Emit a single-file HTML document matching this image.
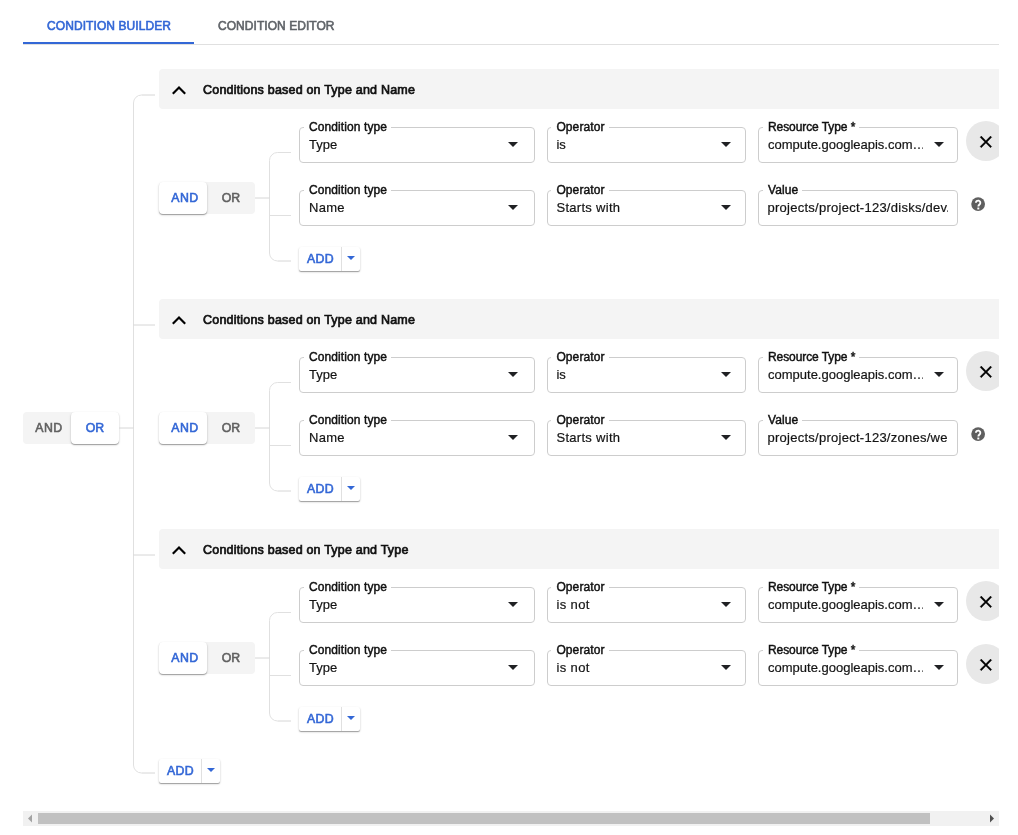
<!DOCTYPE html><html><head><meta charset="utf-8"><style>
*{margin:0;padding:0;box-sizing:border-box}
html,body{width:1018px;height:835px;overflow:hidden;background:#fff;position:relative;font-family:"Liberation Sans",sans-serif;color:#202124}
.a{position:absolute}
.t{position:absolute;white-space:nowrap;line-height:1}
.tab{font-size:12px;font-weight:normal;-webkit-text-stroke:0.6px currentColor;letter-spacing:0.15px}
.hb{position:absolute;left:159px;width:840px;height:40px;background:#f4f4f4;border-radius:4px 0 0 4px}
.ht{font-size:12.5px;font-weight:normal;-webkit-text-stroke:0.7px #111;letter-spacing:0.2px;color:#111}
.fld{position:absolute;height:36px;border:1px solid #cdcdcd;border-radius:4px;background:transparent}
.lbl{position:absolute;top:-8px;left:4px;padding:0 4px 0 5px;background:rgba(255,255,255,0.996);font-size:12px;font-weight:normal;-webkit-text-stroke:0.45px #111;letter-spacing:0.1px;line-height:14px;color:#111;white-space:nowrap}
.val{position:absolute;top:9px;left:9px;font-size:13px;line-height:15px;color:#141414;-webkit-text-stroke:0.2px #141414;white-space:nowrap;overflow:hidden}
.arr{position:absolute;top:14px;width:0;height:0;border-left:5px solid transparent;border-right:5px solid transparent;border-top:5px solid #202124}
.tg{position:absolute;width:96px;height:32px;background:#f4f4f4;border-radius:4px}
.tb{position:absolute;top:0;width:48px;height:32px;font-size:12.3px;font-weight:normal;-webkit-text-stroke:0.6px currentColor;text-align:center;line-height:32px;color:#616161}
.sel{background:#fff;color:#3367d6;border-radius:4px;box-shadow:0 1px 1px rgba(0,0,0,.32),0 1px 3px 0px rgba(0,0,0,.14)}
.add{position:absolute;width:61px;height:24px;background:#fff;border-radius:2px;box-shadow:0 1px 1px rgba(0,0,0,.32),0 1px 3px 0px rgba(0,0,0,.14)}
.addt{position:absolute;left:0;top:0;width:42px;padding-left:1px;letter-spacing:0.3px;height:24px;line-height:24px;text-align:center;font-size:12.3px;font-weight:normal;-webkit-text-stroke:0.6px currentColor;color:#3367d6}
.adddiv{position:absolute;left:42px;top:0;width:1px;height:24px;background:#e0e0e0}
.adda{position:absolute;left:48px;top:9px;width:0;height:0;border-left:4px solid transparent;border-right:4px solid transparent;border-top:4px solid #3367d6}
.ln{position:absolute;background:#dcdcdc}
.cv{position:absolute;border:1px solid #dcdcdc}
</style></head><body><div id="root" style="position:absolute;left:0;top:0;width:1018px;height:835px;opacity:0.999;will-change:opacity"><div class="t tab" style="left:47px;top:20px;color:#3367d6;letter-spacing:0.08px">CONDITION BUILDER</div>
<div class="t tab" style="left:218px;top:20px;color:#5f6368;letter-spacing:0.05px">CONDITION EDITOR</div>
<div class="a" style="left:23px;top:44px;width:976px;height:1px;background:#e0e0e0"></div>
<div class="a" style="left:23px;top:42px;width:171px;height:2px;background:#3367d6"></div>
<div class="hb" style="top:69px"></div>
<svg class="a" style="left:169px;top:77px" width="20" height="24" viewBox="0 0 20 24"><path d="M3.5 25.5" /><polyline points="3.8,24.7 10,18.5 16.2,24.7" transform="translate(0,-8)" stroke="#000" stroke-width="2.2" fill="none"/></svg>
<div class="t ht" style="left:203px;top:84px">Conditions based on Type and Name</div>
<div class="tg" style="left:159px;top:182px"><div class="tb sel" style="left:0;padding-left:4px;letter-spacing:0.5px">AND</div><div class="tb " style="left:48px">OR</div></div>
<div class="fld" style="left:299px;top:127px;width:236px"><div class="lbl" style="margin-left:0px">Condition type</div><div class="val" style="width:191px;margin-left:0px">Type</div><div class="arr" style="left:208px"></div></div>
<div class="fld" style="left:547px;top:127px;width:199px"><div class="lbl" style="margin-left:-0.6px">Operator</div><div class="val" style="width:154px;margin-left:-0.6px">is</div><div class="arr" style="left:173px"></div></div>
<div class="fld" style="left:758px;top:127px;width:200px"><div class="lbl" style="margin-left:0px"><span style="letter-spacing:-0.08px">Resource Type *</span></div><div class="val" style="width:155px;margin-left:0px">compute.googleapis.com&hellip;</div><div class="arr" style="left:175px"></div></div>
<div class="a" style="left:966px;top:121px;width:33px;height:40px;overflow:hidden"><div class="a" style="left:0;top:0;width:40px;height:40px;border-radius:50%;background:#e8e8e8"></div><svg class="a" style="left:10.2px;top:10.95px" width="19.8" height="19.8" viewBox="0 0 24 24"><path d="M19 6.41L17.59 5 12 10.59 6.41 5 5 6.41 10.59 12 5 17.59 6.41 19 12 13.41 17.59 19 19 17.59 13.41 12z" fill="#000" stroke="#000" stroke-width="0.45"/></svg></div>
<div class="fld" style="left:299px;top:190px;width:236px"><div class="lbl" style="margin-left:0px">Condition type</div><div class="val" style="width:191px;margin-left:0px"><span style="letter-spacing:0.3px">Name</span></div><div class="arr" style="left:208px"></div></div>
<div class="fld" style="left:547px;top:190px;width:199px"><div class="lbl" style="margin-left:-0.6px">Operator</div><div class="val" style="width:154px;margin-left:-0.6px"><span style="letter-spacing:0.3px">Starts with</span></div><div class="arr" style="left:173px"></div></div>
<div class="fld" style="left:758px;top:190px;width:200px"><div class="lbl" style="margin-left:0px">Value</div><div class="val" style="width:180px;margin-left:0px"><span style="letter-spacing:0.26px;margin-left:-0.5px">projects/project-123/disks/dev.disk</span></div></div>
<svg class="a" style="left:969.8px;top:195.5px" width="16.56" height="16.56" viewBox="0 0 24 24"><circle cx="11.8" cy="11.75" r="10" fill="#5f5f5f"/><path d="M8.6,9.9 A3.2,3.2 0 1 1 14.6,11.4 C13.6,12.6 12.1,13.1 12.1,15.2" stroke="#fff" stroke-width="2.7" fill="none"/><rect x="10.6" y="16.7" width="2.9" height="2.8" fill="#fff"/></svg>
<div class="add" style="left:299px;top:247px"><div class="addt">ADD</div><div class="adddiv"></div><div class="adda"></div></div>
<div class="hb" style="top:299px"></div>
<svg class="a" style="left:169px;top:307px" width="20" height="24" viewBox="0 0 20 24"><path d="M3.5 25.5" /><polyline points="3.8,24.7 10,18.5 16.2,24.7" transform="translate(0,-8)" stroke="#000" stroke-width="2.2" fill="none"/></svg>
<div class="t ht" style="left:203px;top:314px">Conditions based on Type and Name</div>
<div class="tg" style="left:159px;top:412px"><div class="tb sel" style="left:0;padding-left:4px;letter-spacing:0.5px">AND</div><div class="tb " style="left:48px">OR</div></div>
<div class="fld" style="left:299px;top:357px;width:236px"><div class="lbl" style="margin-left:0px">Condition type</div><div class="val" style="width:191px;margin-left:0px">Type</div><div class="arr" style="left:208px"></div></div>
<div class="fld" style="left:547px;top:357px;width:199px"><div class="lbl" style="margin-left:-0.6px">Operator</div><div class="val" style="width:154px;margin-left:-0.6px">is</div><div class="arr" style="left:173px"></div></div>
<div class="fld" style="left:758px;top:357px;width:200px"><div class="lbl" style="margin-left:0px"><span style="letter-spacing:-0.08px">Resource Type *</span></div><div class="val" style="width:155px;margin-left:0px">compute.googleapis.com&hellip;</div><div class="arr" style="left:175px"></div></div>
<div class="a" style="left:966px;top:351px;width:33px;height:40px;overflow:hidden"><div class="a" style="left:0;top:0;width:40px;height:40px;border-radius:50%;background:#e8e8e8"></div><svg class="a" style="left:10.2px;top:10.95px" width="19.8" height="19.8" viewBox="0 0 24 24"><path d="M19 6.41L17.59 5 12 10.59 6.41 5 5 6.41 10.59 12 5 17.59 6.41 19 12 13.41 17.59 19 19 17.59 13.41 12z" fill="#000" stroke="#000" stroke-width="0.45"/></svg></div>
<div class="fld" style="left:299px;top:420px;width:236px"><div class="lbl" style="margin-left:0px">Condition type</div><div class="val" style="width:191px;margin-left:0px"><span style="letter-spacing:0.3px">Name</span></div><div class="arr" style="left:208px"></div></div>
<div class="fld" style="left:547px;top:420px;width:199px"><div class="lbl" style="margin-left:-0.6px">Operator</div><div class="val" style="width:154px;margin-left:-0.6px"><span style="letter-spacing:0.3px">Starts with</span></div><div class="arr" style="left:173px"></div></div>
<div class="fld" style="left:758px;top:420px;width:200px"><div class="lbl" style="margin-left:0px">Value</div><div class="val" style="width:180px;margin-left:0px"><span style="letter-spacing:0.26px;margin-left:-0.5px">projects/project-123/zones/we</span></div></div>
<svg class="a" style="left:969.8px;top:425.5px" width="16.56" height="16.56" viewBox="0 0 24 24"><circle cx="11.8" cy="11.75" r="10" fill="#5f5f5f"/><path d="M8.6,9.9 A3.2,3.2 0 1 1 14.6,11.4 C13.6,12.6 12.1,13.1 12.1,15.2" stroke="#fff" stroke-width="2.7" fill="none"/><rect x="10.6" y="16.7" width="2.9" height="2.8" fill="#fff"/></svg>
<div class="add" style="left:299px;top:477px"><div class="addt">ADD</div><div class="adddiv"></div><div class="adda"></div></div>
<div class="hb" style="top:529px"></div>
<svg class="a" style="left:169px;top:537px" width="20" height="24" viewBox="0 0 20 24"><path d="M3.5 25.5" /><polyline points="3.8,24.7 10,18.5 16.2,24.7" transform="translate(0,-8)" stroke="#000" stroke-width="2.2" fill="none"/></svg>
<div class="t ht" style="left:203px;top:544px">Conditions based on Type and Type</div>
<div class="tg" style="left:159px;top:642px"><div class="tb sel" style="left:0;padding-left:4px;letter-spacing:0.5px">AND</div><div class="tb " style="left:48px">OR</div></div>
<div class="fld" style="left:299px;top:587px;width:236px"><div class="lbl" style="margin-left:0px">Condition type</div><div class="val" style="width:191px;margin-left:0px">Type</div><div class="arr" style="left:208px"></div></div>
<div class="fld" style="left:547px;top:587px;width:199px"><div class="lbl" style="margin-left:-0.6px">Operator</div><div class="val" style="width:154px;margin-left:-0.6px"><span style="letter-spacing:0.4px">is not</span></div><div class="arr" style="left:173px"></div></div>
<div class="fld" style="left:758px;top:587px;width:200px"><div class="lbl" style="margin-left:0px"><span style="letter-spacing:-0.08px">Resource Type *</span></div><div class="val" style="width:155px;margin-left:0px">compute.googleapis.com&hellip;</div><div class="arr" style="left:175px"></div></div>
<div class="a" style="left:966px;top:581px;width:33px;height:40px;overflow:hidden"><div class="a" style="left:0;top:0;width:40px;height:40px;border-radius:50%;background:#e8e8e8"></div><svg class="a" style="left:10.2px;top:10.95px" width="19.8" height="19.8" viewBox="0 0 24 24"><path d="M19 6.41L17.59 5 12 10.59 6.41 5 5 6.41 10.59 12 5 17.59 6.41 19 12 13.41 17.59 19 19 17.59 13.41 12z" fill="#000" stroke="#000" stroke-width="0.45"/></svg></div>
<div class="fld" style="left:299px;top:650px;width:236px"><div class="lbl" style="margin-left:0px">Condition type</div><div class="val" style="width:191px;margin-left:0px">Type</div><div class="arr" style="left:208px"></div></div>
<div class="fld" style="left:547px;top:650px;width:199px"><div class="lbl" style="margin-left:-0.6px">Operator</div><div class="val" style="width:154px;margin-left:-0.6px"><span style="letter-spacing:0.4px">is not</span></div><div class="arr" style="left:173px"></div></div>
<div class="fld" style="left:758px;top:650px;width:200px"><div class="lbl" style="margin-left:0px"><span style="letter-spacing:-0.08px">Resource Type *</span></div><div class="val" style="width:155px;margin-left:0px">compute.googleapis.com&hellip;</div><div class="arr" style="left:175px"></div></div>
<div class="a" style="left:966px;top:644px;width:33px;height:40px;overflow:hidden"><div class="a" style="left:0;top:0;width:40px;height:40px;border-radius:50%;background:#e8e8e8"></div><svg class="a" style="left:10.2px;top:10.95px" width="19.8" height="19.8" viewBox="0 0 24 24"><path d="M19 6.41L17.59 5 12 10.59 6.41 5 5 6.41 10.59 12 5 17.59 6.41 19 12 13.41 17.59 19 19 17.59 13.41 12z" fill="#000" stroke="#000" stroke-width="0.45"/></svg></div>
<div class="add" style="left:299px;top:707px"><div class="addt">ADD</div><div class="adddiv"></div><div class="adda"></div></div>
<div class="tg" style="left:23px;top:412px"><div class="tb " style="left:0;padding-left:4px;letter-spacing:0.5px">AND</div><div class="tb sel" style="left:48px">OR</div></div>
<svg class="a" style="left:0;top:0" width="1018" height="835"><path d="M291,152.5 H277.5 A8,8 0 0 0 269.5,160.5 V253 A8,8 0 0 0 277.5,261 M269.5,215.5 H291 M291,382.5 H277.5 A8,8 0 0 0 269.5,390.5 V483 A8,8 0 0 0 277.5,491 M269.5,445.5 H291 M291,612.5 H277.5 A8,8 0 0 0 269.5,620.5 V713 A8,8 0 0 0 277.5,721 M269.5,675.5 H291 M141.5,95 A8,8 0 0 0 133.5,103 V765 A8,8 0 0 0 141.5,773" stroke="#e0e0e0" stroke-width="1" fill="none"/><path d="M255,198 H269.5 M277.5,261 H291 M133.5,325 H155 M255,428 H269.5 M277.5,491 H291 M133.5,555 H155 M255,658 H269.5 M277.5,721 H291 M141.5,95 H155 M141.5,773 H155 M119,428 H133.5" stroke="#d6d6d6" stroke-width="1" fill="none"/></svg>
<div class="add" style="left:159px;top:759px"><div class="addt">ADD</div><div class="adddiv"></div><div class="adda"></div></div>
<div class="a" style="left:23px;top:811px;width:976px;height:15px;background:#f1f1f1"></div>
<div class="a" style="left:38px;top:813px;width:892px;height:11px;background:#c1c1c1"></div>
<svg class="a" style="left:23px;top:811px" width="15" height="15" viewBox="0 0 15 15"><polygon points="9,3.5 9,11.5 5,7.5" fill="#a3a3a3"/></svg>
<svg class="a" style="left:984px;top:811px" width="15" height="15" viewBox="0 0 15 15"><polygon points="6,3.5 6,11.5 10,7.5" fill="#505050"/></svg></div></body></html>
